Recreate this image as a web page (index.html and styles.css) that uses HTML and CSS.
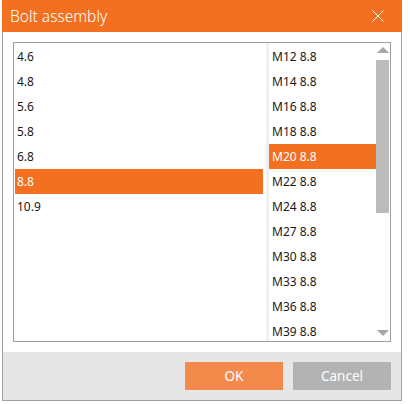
FILE: index.html
```html
<!DOCTYPE html>
<html lang="en">
<head>
    <meta charset="UTF-8">
    <title>Bolt assembly</title>
    <link rel="stylesheet" href="styles.css">
</head>
<body>
    <div class="window">
        <div class="titlebar">
            <span class="title">Bolt assembly</span>
            <svg class="close" width="12" height="12" viewBox="0 0 12 12">
                <path d="M0.5 0.5 L11.5 11.5 M11.5 0.5 L0.5 11.5" stroke="#fff" stroke-width="1" fill="none"/>
            </svg>
        </div>
        <div class="content">
            <div class="listbox">
                <div class="list grades">
                    <div class="item">4.6</div>
                    <div class="item">4.8</div>
                    <div class="item">5.6</div>
                    <div class="item">5.8</div>
                    <div class="item">6.8</div>
                    <div class="item selected">8.8</div>
                    <div class="item">10.9</div>
                </div>
                <div class="list sizes">
                    <div class="item">M12 8.8</div>
                    <div class="item">M14 8.8</div>
                    <div class="item">M16 8.8</div>
                    <div class="item">M18 8.8</div>
                    <div class="item selected">M20 8.8</div>
                    <div class="item">M22 8.8</div>
                    <div class="item">M24 8.8</div>
                    <div class="item">M27 8.8</div>
                    <div class="item">M30 8.8</div>
                    <div class="item">M33 8.8</div>
                    <div class="item">M36 8.8</div>
                    <div class="item">M39 8.8</div>
                </div>
                <div class="scrollbar">
                    <div class="arrow up"></div>
                    <div class="track"><div class="thumb"></div></div>
                    <div class="arrow down"></div>
                </div>
            </div>
        </div>
        <div class="footer">
            <button class="btn ok">OK</button>
            <button class="btn cancel">Cancel</button>
        </div>
    </div>
</body>
</html>
```

FILE: styles.css
```css
body {
    margin: 0;
    padding: 0 0 0 2px;
    background: #fff;
    font-family: "Noto Sans", "Open Sans", sans-serif;
}

.window {
    width: 398px;
    border: 1px solid #a0a0a0;
    border-top: none;
    background: #fff;
}

.titlebar {
    height: 32px;
    margin: 0 -1px;
    background: #f37021;
    display: flex;
    align-items: center;
    justify-content: space-between;
    padding: 0 18px 0 8px;
}

.title {
    color: #fff;
    font-size: 15.5px;
    font-weight: 300;
}

.content {
    padding: 10px;
}

.listbox {
    height: 298px;
    border: 1px solid #a0a0a0;
    display: flex;
    overflow: hidden;
}

.list {
    padding-top: 1px;
    font-size: 12px;
    color: #1a1a1a;
}

.grades {
    width: 248px;
    padding-left: 1px;
    padding-right: 3px;
}

.sizes {
    width: 107px;
    border-left: 3px solid #f0f0f0;
}

.item {
    height: 25px;
    line-height: 25px;
    padding-left: 2px;
    white-space: nowrap;
}

.sizes .item {
    padding-left: 3px;
}

.item.selected {
    background: #f37021;
    color: #fff;
}

.scrollbar {
    width: 13px;
    display: flex;
    flex-direction: column;
    align-items: center;
}

.arrow {
    width: 0;
    height: 0;
    border-left: 6px solid transparent;
    border-right: 6px solid transparent;
}

.arrow.up {
    margin-top: 4px;
    border-bottom: 6px solid #a6a6a6;
}

.arrow.down {
    margin-bottom: 5px;
    border-top: 6px solid #a6a6a6;
}

.track {
    flex: 1;
    width: 13px;
    padding-top: 7px;
}

.thumb {
    height: 153px;
    background: #bcbcbc;
}

.footer {
    height: 48px;
    background: #e6e6e6;
    display: flex;
    justify-content: flex-end;
    align-items: flex-start;
    gap: 10px;
    padding: 10px 10px 0 0;
    box-sizing: border-box;
}

.btn {
    width: 98px;
    height: 28px;
    border: none;
    color: #fff;
    font-family: "Noto Sans", "Open Sans", sans-serif;
    font-size: 13.5px;
}

.ok {
    background: #f38a4c;
}

.cancel {
    background: #b3b3b3;
}
```
